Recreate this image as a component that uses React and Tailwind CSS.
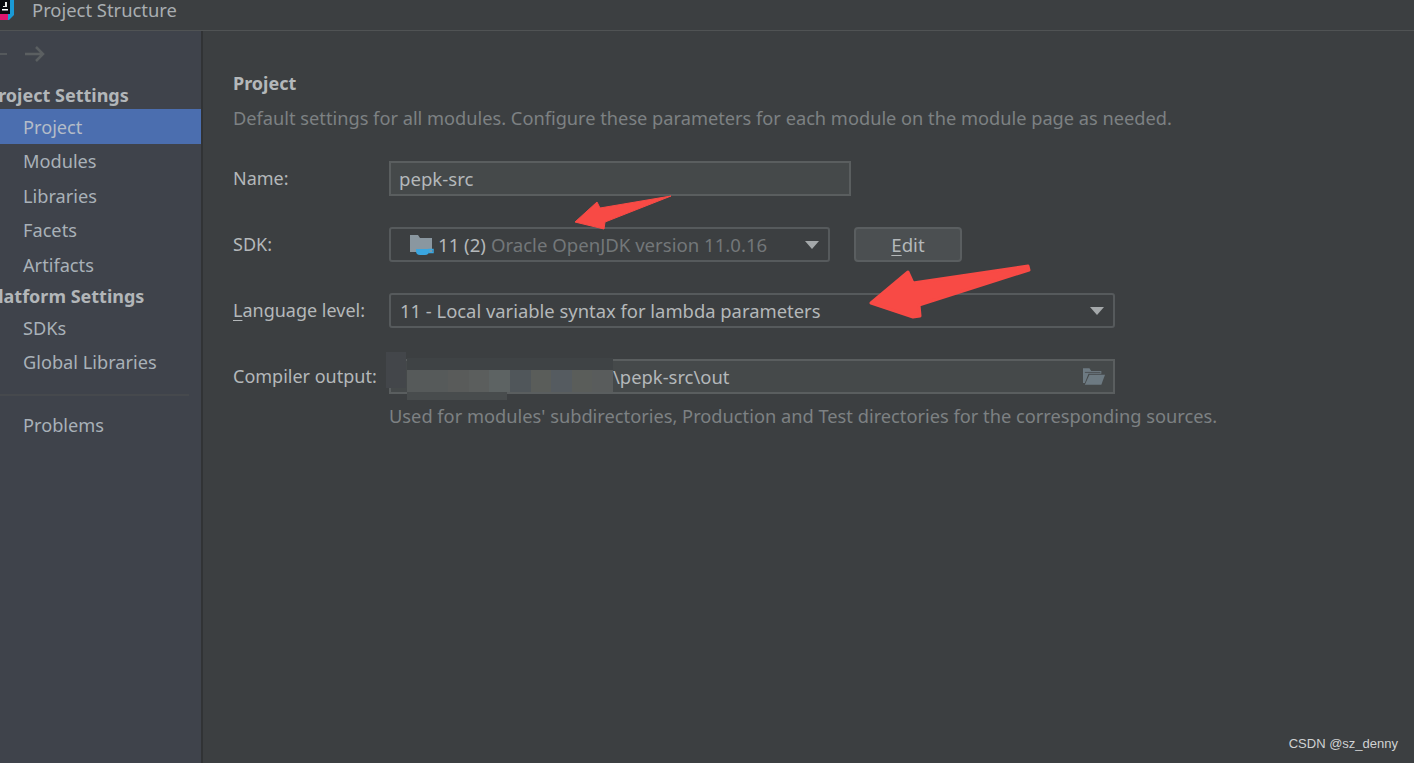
import React from 'react';

const font = { fontFamily: '"Noto Sans", "Open Sans", sans-serif' };

const navTop = ['Modules', 'Libraries', 'Facets', 'Artifacts'];

function NavItem({ label }) {
  return <div className="h-[34.5px] pl-[23px] leading-[34px] text-[18.2px] text-[#a9b1b8]">{label}</div>;
}

function Caret({ color = '#a4a8aa' }) {
  return (
    <svg width="14" height="8" viewBox="0 0 14 8" className="shrink-0">
      <path d="M0 0h14L7 8z" fill={color} />
    </svg>
  );
}

function JdkIcon() {
  return (
    <svg width="24" height="22" viewBox="0 0 24 22" className="shrink-0">
      <path d="M0 1h8l2 3h12v14H0z" fill="#8a97a0" />
      <path d="M6 15h13v2a4 4 0 0 1-4 4h-5a4 4 0 0 1-4-4z" fill="#3aa6e0" />
      <path d="M19 15.500h4v3h-4z" fill="none" stroke="#3aa6e0" strokeWidth="1.500" />
    </svg>
  );
}

function OpenFolder() {
  return (
    <svg width="22" height="17" viewBox="0 0 24 18" className="shrink-0">
      <path d="M0 0h7l2 3h11v3H6L2 16H0z" fill="#6d7a82" />
      <path d="M7 7h17l-4 11H2z" fill="#6d7a82" />
      <path d="M2 4h17v1H2z" fill="#4a4f51" />
    </svg>
  );
}

function Label({ children }) {
  return <div className="w-[156px] shrink-0 text-[18px] text-[#b4b8ba]">{children}</div>;
}

function Arrows() {
  return (
    <svg width="1414" height="763" viewBox="0 0 1414 763" className="absolute left-0 top-0 pointer-events-none">
      <path d="M575 222 L597 202 L600 208 L671 196 L605 222 L604 229 Z" fill="#f84a45" stroke="#f84a45" strokeLinejoin="round" />
      <path
        d="M871 303 L908 272 L913 283 L1028 266 L1029 270 L919 305 L920 316 L913 317 Z"
        fill="#f84a45"
        stroke="#f84a45"
        strokeWidth="3"
        strokeLinejoin="round"
      />
    </svg>
  );
}

function Smudge() {
  const blocks = ['#565a5a', '#565a5a', '#595b5a', '#5b5e5d', '#5d6363', '#50565a', '#5a5d5a', '#555b60', '#5a5d5a', '#595c5c'];
  return (
    <div className="absolute left-[387px] top-[352px] h-[50px] w-[226px]">
      <div className="absolute left-[-1px] top-0 h-[36px] w-[20px] bg-[#43464a]" />
      <div className="absolute left-[20px] top-[6px] h-[12px] w-[206px] bg-[#3f4345]" />
      <div className="absolute left-[20px] top-[18px] flex h-[22px] w-[206px]">
        {blocks.map((c, i) => (
          <div key={i} className="flex-1" style={{ backgroundColor: c }} />
        ))}
      </div>
      <div className="absolute left-[20px] top-[40px] h-[8px] w-[100px] bg-[#484c4d]" />
    </div>
  );
}

export default function App() {
  return (
    <div className="relative h-[763px] w-[1414px] overflow-hidden bg-[#3c3f41]" style={font}>
      {/* Title bar */}
      <div className="flex h-[31px] items-center border-b border-[#505354] bg-[#3c3f41]">
        <svg width="14" height="21" viewBox="0 0 14 21" className="mt-[-10px] shrink-0">
          <path d="M0 0h14v15l-5 5H0z" fill="#1a9ad6" />
          <path d="M0 14h8v6H0z" fill="#e0156f" />
          <path d="M0 0h10v14H0z" fill="#0b0b10" />
          <path d="M2 9h6v1.500H2z" fill="#fff" />
          <path d="M5 2h2v5H3V6h2z" fill="#e8e8e8" />
        </svg>
        <div className="ml-[18px] mt-[-10px] text-[18.4px] text-[#a9aeb1]">Project Structure</div>
      </div>

      <div className="flex h-[732px]">
        {/* Sidebar */}
        <div className="w-[201px] shrink-0 bg-[#3f434b]">
          <div className="flex h-[45px] items-center gap-[17px] pt-[1px]">
            <svg width="8" height="18" viewBox="0 0 8 18" className="shrink-0">
              <path d="M0 9h7" stroke="#55595c" strokeWidth="2" />
            </svg>
            <svg width="20" height="18" viewBox="0 0 20 18" className="shrink-0">
              <path d="M0 9h18M11 2l7 7-7 7" stroke="#5b5f61" strokeWidth="2.500" fill="none" />
            </svg>
          </div>
          <div className="ml-[-13px] h-[33px] whitespace-nowrap text-[18px] font-bold leading-[38px] text-[#b2b6b9]">Project Settings</div>
          <div className="h-[35px] bg-[#4b6eaf] pl-[23px] text-[18.2px] leading-[37px] text-[#b4bcc8]">Project</div>
          {navTop.map((n) => (
            <NavItem key={n} label={n} />
          ))}
          <div className="ml-[-13px] h-[28px] whitespace-nowrap text-[18px] font-bold leading-[28px] text-[#b2b6b9]">Platform Settings</div>
          <div className="pt-[1px]">
            <NavItem label="SDKs" />
            <div className="mt-[-1px]"><NavItem label="Global Libraries" /></div>
          </div>
          <div className="mr-[12px] mt-[15px] h-[2px] bg-[#46494d]" />
          <div className="mt-[12px]">
            <NavItem label="Problems" />
          </div>
        </div>
        <div className="w-[2px] shrink-0 bg-[#313335]" />

        {/* Main panel */}
        <div className="flex-1 pl-[30px]">
          <div className="mt-[38px] h-[28px] text-[18px] font-bold leading-[28px] text-[#b4b8ba]">Project</div>
          <div className="mt-[7px] h-[28px] whitespace-nowrap text-[18.23px] leading-[28px] text-[#7d8183]">
            Default settings for all modules. Configure these parameters for each module on the module page as needed.
          </div>

          <div className="mt-[29px] flex items-center">
            <Label>Name:</Label>
            <div className="flex h-[35px] w-[462px] items-center border-2 border-[#5a5e5f] bg-[#45494a] pl-[8px] text-[18.6px] leading-[26px] text-[#b4b8ba]">pepk-src</div>
          </div>

          <div className="mt-[31px] flex items-center">
            <Label>SDK:</Label>
            <div className="flex h-[35px] w-[441px] items-center rounded-[3px] border-2 border-[#565a5c] pl-[19px] pr-[9px] text-[18.6px]">
              <JdkIcon />
              <span className="ml-[4px] text-[#b4b8ba]">11 (2)</span>
              <span className="ml-[5px] text-[#737779]">Oracle OpenJDK version 11.0.16</span>
              <span className="ml-auto"><Caret /></span>
            </div>
            <div className="ml-[24px] flex h-[35px] w-[108px] items-center justify-center rounded-[4px] border-2 border-[#5a5e60] bg-[#4b4f51] text-[18.6px] text-[#b4b8ba]">
              <span><span className="underline underline-offset-3">E</span>dit</span>
            </div>
          </div>

          <div className="mt-[31px] flex items-center">
            <Label><span className="underline underline-offset-3">L</span>anguage level:</Label>
            <div className="flex h-[35px] w-[726px] items-center rounded-[3px] border-2 border-[#565a5c] pl-[9px] pr-[9px] text-[18.4px] text-[#b4b8ba]">
              <span>11 - Local variable syntax for lambda parameters</span>
              <span className="ml-auto"><Caret /></span>
            </div>
          </div>

          <div className="mt-[31px] flex items-center">
            <Label>Compiler output:</Label>
            <div className="flex h-[35px] w-[726px] items-center border-2 border-[#5a5e5f] bg-[#45494a] pl-[222px] pr-[8px] text-[18.4px] leading-[26px] text-[#b4b8ba]">
              <span>\pepk-src\out</span>
              <span className="ml-auto"><OpenFolder /></span>
            </div>
          </div>

          <div className="ml-[156px] mt-[8px] whitespace-nowrap text-[18.25px] leading-[28px] text-[#7d8183]">
            Used for modules' subdirectories, Production and Test directories for the corresponding sources.
          </div>
        </div>
      </div>

      <Smudge />
      <Arrows />
      <div className="absolute bottom-[10px] right-[16px] text-[13px] text-[#d0d2d3]" style={{ fontFamily: '"Liberation Sans", sans-serif' }}>CSDN @sz_denny</div>
    </div>
  );
}
